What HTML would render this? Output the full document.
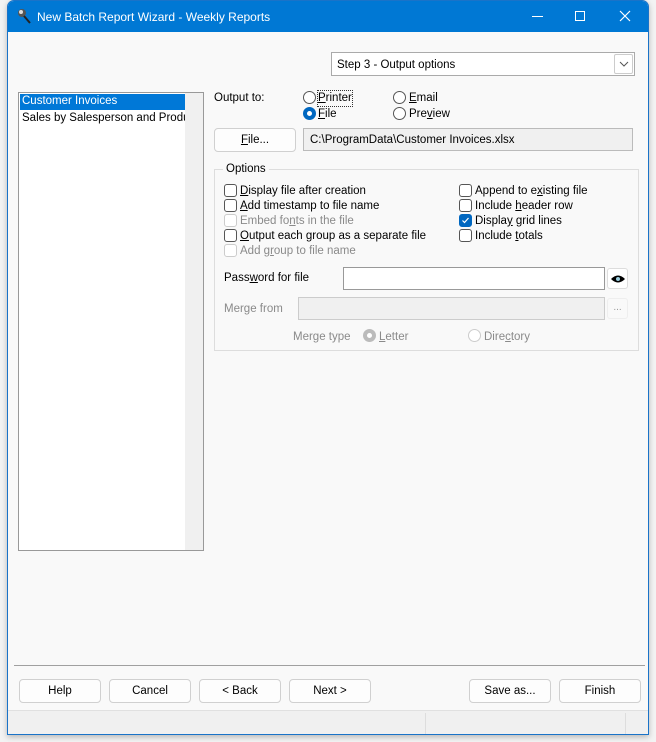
<!DOCTYPE html>
<html><head><style>
*{box-sizing:border-box;margin:0;padding:0}
body{width:656px;height:742px;background:#f3f3f3;font-family:"Liberation Sans",sans-serif;font-size:11.5px;line-height:21px;color:#000;position:relative;overflow:hidden}
.win{position:absolute;left:7px;top:0;width:642px;height:735px;background:#f9f9f9;border:1px solid #1a73c8;border-radius:7px 7px 0 0;box-shadow:0 2px 6px rgba(0,0,0,.25);overflow:hidden}
.title{position:absolute;left:0;top:0;width:100%;height:31px;background:#0078d4;color:#fff;font-size:12px;line-height:14px}
.a{position:absolute;white-space:nowrap}
.btn{position:absolute;height:24px;background:#fdfdfd;border:1px solid #d0d0d0;border-radius:4px;text-align:center;line-height:22px}
.cb{position:absolute;width:13px;height:13px;border:1px solid #555;border-radius:3px;background:#fff}
.cb.d{border-color:#ccc}
.rb{position:absolute;width:13px;height:13px;border:1px solid #555;border-radius:50%;background:#fff}
.dis{color:#8a8a8a}
u{text-decoration:underline}
</style></head><body>
<div class="win">
<div class="title">
<svg class="a" style="left:8px;top:6px" width="16" height="18"><circle cx="6" cy="6" r="4" fill="#555"/><circle cx="5" cy="5" r="2" fill="#ddd"/><line x1="8" y1="9" x2="14" y2="16" stroke="#222" stroke-width="2"/></svg>
<div class="a" style="left:29px;top:9px">New Batch Report Wizard - Weekly Reports</div>
<div class="a" style="left:524px;top:15px;width:11px;height:1px;background:#fff"></div>
<div class="a" style="left:567px;top:10px;width:10px;height:10px;border:1px solid #fff"></div>
<svg class="a" style="left:611px;top:9px" width="12" height="12"><path d="M1 1L11 11M11 1L1 11" stroke="#fff" stroke-width="1.2"/></svg>
</div>

<div class="a" style="left:323px;top:51px;width:304px;height:24px;background:#fff;border:1px solid #aaa"></div>
<div class="a" style="left:329px;top:54px">Step 3 - Output options</div>
<div class="a" style="left:606px;top:53px;width:19px;height:20px;border:1px solid #ccc;border-radius:2px"></div>
<svg class="a" style="left:611px;top:60px" width="10" height="6"><path d="M1 1L5 5L9 1" stroke="#555" fill="none"/></svg>

<div class="a" style="left:10px;top:91px;width:186px;height:459px;background:#fff;border:1px solid #999"></div>
<div class="a" style="left:177px;top:92px;width:18px;height:457px;background:#f0f0f0"></div>
<div class="a" style="left:12px;top:93px;width:165px;height:16px;background:#0078d7"></div>
<div class="a" style="left:14px;top:91px;color:#fff;line-height:19px">Customer Invoices</div>
<div class="a" style="left:14px;top:108px;width:163px;overflow:hidden;line-height:19px">Sales by Salesperson and Product</div>

<div class="a" style="left:206px;top:87px">Output to:</div>
<div class="rb" style="left:295px;top:90px"></div><div class="a" style="left:310px;outline:1px dotted #333;line-height:15px;top:90px"><u>P</u>rinter</div>
<div class="rb" style="left:295px;top:106px;border:4px solid #0067c0"></div><div class="a" style="left:310px;top:103px"><u>F</u>ile</div>
<div class="rb" style="left:385px;top:90px"></div><div class="a" style="left:401px;top:87px"><u>E</u>mail</div>
<div class="rb" style="left:385px;top:106px"></div><div class="a" style="left:401px;top:103px">Pre<u>v</u>iew</div>

<div class="btn" style="left:206px;top:127px;width:82px"><u>F</u>ile...</div>
<div class="a" style="left:295px;top:127px;width:330px;height:23px;background:#f0f0f0;border:1px solid #bbb"></div>
<div class="a" style="left:302px;top:129px">C:\ProgramData\Customer Invoices.xlsx</div>

<div class="a" style="left:206px;top:168px;width:425px;height:182px;border:1px solid #ddd"></div>
<div class="a" style="left:215px;top:161px;background:#f9f9f9;padding:0 3px;line-height:15px">Options</div>

<div class="cb" style="left:216px;top:183px"></div><div class="a" style="left:232px;top:180px"><u>D</u>isplay file after creation</div>
<div class="cb" style="left:216px;top:198px"></div><div class="a" style="left:232px;top:195px"><u>A</u>dd timestamp to file name</div>
<div class="cb d" style="left:216px;top:213px"></div><div class="a dis" style="left:232px;top:210px">Embed fo<u>n</u>ts in the file</div>
<div class="cb" style="left:216px;top:228px"></div><div class="a" style="left:232px;top:225px"><u>O</u>utput each group as a separate file</div>
<div class="cb d" style="left:216px;top:243px"></div><div class="a dis" style="left:232px;top:240px">Add g<u>r</u>oup to file name</div>

<div class="cb" style="left:451px;top:183px"></div><div class="a" style="left:467px;top:180px">Append to e<u>x</u>isting file</div>
<div class="cb" style="left:451px;top:198px"></div><div class="a" style="left:467px;top:195px">Include <u>h</u>eader row</div>
<div class="cb" style="left:451px;top:213px;background:#0067c0;border-color:#0067c0"><svg style="position:absolute;left:1px;top:1px" width="9" height="9"><path d="M1.5 4.5L3.5 6.5L7.5 2" stroke="#fff" fill="none" stroke-width="1.2"/></svg></div><div class="a" style="left:467px;top:210px">Displa<u>y</u> grid lines</div>
<div class="cb" style="left:451px;top:228px"></div><div class="a" style="left:467px;top:225px">Include <u>t</u>otals</div>

<div class="a" style="left:216px;top:267px">Pass<u>w</u>ord for file</div>
<div class="a" style="left:335px;top:266px;width:262px;height:23px;background:#fff;border:1px solid #999"></div>
<div class="a" style="left:599px;top:267px;width:21px;height:21px;border:1px solid #ddd;border-radius:3px;background:#fff"></div>
<svg class="a" style="left:602px;top:273px" width="16" height="10"><path d="M1 5Q8 -2 15 5Q8 12 1 5Z" fill="#000"/><circle cx="8" cy="5" r="2" fill="#9cd"/></svg>

<div class="a dis" style="left:216px;top:298px">Merge from</div>
<div class="a" style="left:290px;top:296px;width:307px;height:23px;background:#f0f0f0;border:1px solid #ccc"></div>
<div class="a" style="left:599px;top:297px;width:21px;height:21px;border:1px solid #eee;border-radius:3px;color:#999;text-align:center;font-size:10px;line-height:18px">...</div>
<div class="a dis" style="left:285px;top:326px">Merge type</div>
<div class="rb" style="left:355px;top:328px;border:4px solid #bbb"></div><div class="a dis" style="left:371px;top:326px"><u>L</u>etter</div>
<div class="rb" style="left:460px;top:328px;border-color:#ccc"></div><div class="a dis" style="left:476px;top:326px">Dire<u>c</u>tory</div>

<div class="a" style="left:6px;top:664px;width:631px;height:1px;background:#a0a0a0"></div>
<div class="btn" style="left:11px;top:678px;width:82px">Help</div>
<div class="btn" style="left:101px;top:678px;width:82px">Cancel</div>
<div class="btn" style="left:191px;top:678px;width:82px">&lt; Back</div>
<div class="btn" style="left:281px;top:678px;width:82px">Next &gt;</div>
<div class="btn" style="left:461px;top:678px;width:82px">Save as...</div>
<div class="btn" style="left:551px;top:678px;width:82px">Finish</div>

<div class="a" style="left:0;top:709px;width:100%;height:26px;background:#f0f0f0;border-top:1px solid #e0e0e0"></div>
<div class="a" style="left:417px;top:712px;width:1px;height:22px;background:#ddd"></div>
<div class="a" style="left:617px;top:712px;width:1px;height:22px;background:#ddd"></div>
</div>
</body></html>
